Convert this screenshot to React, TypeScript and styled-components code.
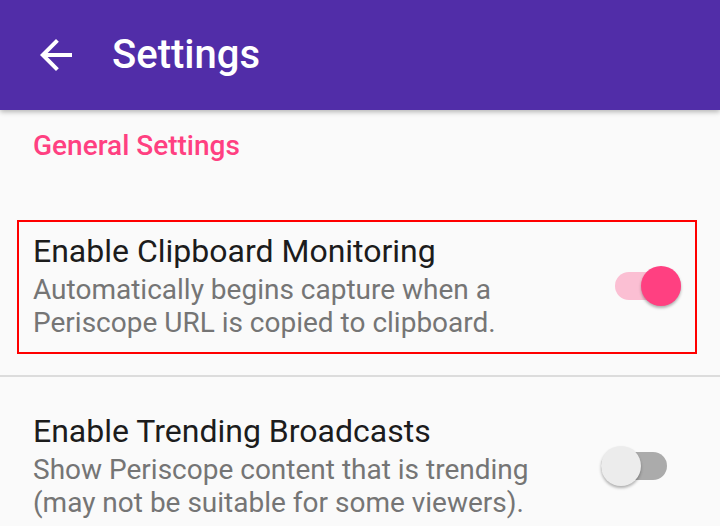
import styled, { createGlobalStyle } from "styled-components";

const GlobalStyle = createGlobalStyle`
  html, body {
    margin: 0;
    padding: 0;
    background: #fafafa;
  }
  body {
    font-family: Roboto, "Noto Sans", sans-serif;
    width: 720px;
    height: 526px;
    overflow: hidden;
  }
`;

const Page = styled.div`
  width: 720px;
  height: 526px;
  background: #fafafa;
  overflow: hidden;
`;

const AppBar = styled.header`
  height: 110px;
  background: #512da8;
  display: flex;
  align-items: center;
  box-shadow: 0 2px 5px rgba(0, 0, 0, 0.28);
  position: relative;
  z-index: 1;
`;

const BackButton = styled.button`
  width: 48px;
  height: 48px;
  margin-left: 32px;
  padding: 0;
  border: none;
  background: none;
  display: flex;
  align-items: center;
  justify-content: center;
  cursor: pointer;
`;

const Title = styled.h1`
  margin: 0 0 0 32px;
  color: #fff;
  font-size: 40px;
  font-weight: 500;
  line-height: 48px;
`;

const Category = styled.div`
  padding: 20px 33px 0;
  color: #ff4081;
  font-size: 28px;
  font-weight: 500;
  line-height: 32px;
  height: 110px;
  box-sizing: border-box;
`;

const Highlight = styled.div`
  margin: 0 23px 0 17px;
  border: 2px solid #ff0000;
`;

const Row = styled.div<{ $padLeft: number; $padRight: number; $padTop: number; $padBottom: number }>`
  display: flex;
  align-items: center;
  padding: ${(p) => `${p.$padTop}px ${p.$padRight}px ${p.$padBottom}px ${p.$padLeft}px`};
`;

const Texts = styled.div`
  flex: 1;
  min-width: 0;
`;

const ItemTitle = styled.div`
  color: #1c1c1c;
  font-size: 32px;
  line-height: 36px;
`;

const Summary = styled.div`
  margin-top: 5px;
  color: #757575;
  font-size: 28px;
  line-height: 32.5px;
`;

const Divider = styled.hr`
  margin: 21px 0 0;
  border: none;
  height: 2px;
  background: #dcdcdc;
`;

const Switch = styled.div`
  position: relative;
  width: 66px;
  height: 40px;
  flex: none;
`;

const Track = styled.div<{ $on: boolean }>`
  position: absolute;
  left: 0;
  right: 0;
  top: 6px;
  height: 28px;
  border-radius: 14px;
  background: ${(p) => (p.$on ? "#fbbfd3" : "#ababab")};
`;

const Thumb = styled.div<{ $on: boolean }>`
  position: absolute;
  top: 0;
  ${(p) => (p.$on ? "right: 0;" : "left: 0;")}
  width: 40px;
  height: 40px;
  border-radius: 50%;
  background: ${(p) => (p.$on ? "#ff4081" : "#ececec")};
  box-shadow: 0 2px 3px rgba(0, 0, 0, 0.3);
`;

function Toggle({ on }: { on: boolean }) {
  return (
    <Switch>
      <Track $on={on} />
      <Thumb $on={on} />
    </Switch>
  );
}

export default function App() {
  return (
    <Page>
      <GlobalStyle />
      <AppBar>
        <BackButton aria-label="Back">
          <svg width="48" height="48" viewBox="0 0 24 24">
            <path fill="#fff" d="M20 11H7.83l5.59-5.59L12 4l-8 8 8 8 1.41-1.41L7.83 13H20v-2z" />
          </svg>
        </BackButton>
        <Title>Settings</Title>
      </AppBar>

      <Category>General Settings</Category>

      <Highlight>
        <Row $padLeft={14} $padRight={14} $padTop={11} $padBottom={13}>
          <Texts>
            <ItemTitle>Enable Clipboard Monitoring</ItemTitle>
            <Summary>
              Automatically begins capture when a
              <br />
              Periscope URL is copied to clipboard.
            </Summary>
          </Texts>
          <Toggle on={true} />
        </Row>
      </Highlight>

      <Divider />

      <Row $padLeft={33} $padRight={53} $padTop={36} $padBottom={0}>
        <Texts>
          <ItemTitle>Enable Trending Broadcasts</ItemTitle>
          <Summary>
            Show Periscope content that is trending
            <br />
            (may not be suitable for some viewers).
          </Summary>
        </Texts>
        <Toggle on={false} />
      </Row>
    </Page>
  );
}
